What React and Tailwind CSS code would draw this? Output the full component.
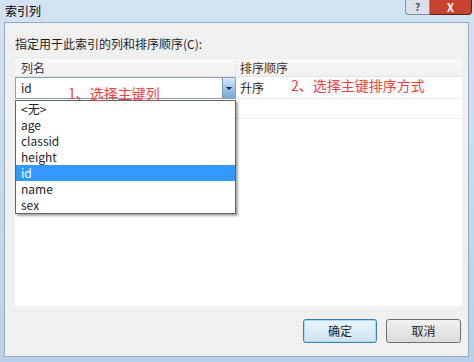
import React from "react";

const font = { fontFamily: '"Microsoft YaHei", "Noto Sans CJK SC", sans-serif' };

const items = ["<无>", "age", "classid", "height", "id", "name", "sex"];

export default function App() {
  return (
    <div
      className="w-[474px] h-[362px] flex flex-col bg-gradient-to-b from-[#d4e3f3] to-[#b9d0ea] text-[12px] text-[#1e1e1e] overflow-hidden"
      style={font}
    >
      {/* title bar */}
      <div className="h-[22px] flex items-start justify-between pl-[5px] pr-[2px]">
        <span className="mt-[3px] leading-[16px] text-black">索引列</span>
        <div className="flex items-start">
          <div className="w-[25px] h-[15px] rounded-bl-[4px] border border-t-0 border-[#7f8fa6] bg-[#d9e1ea] flex items-center justify-center text-[10px] font-bold leading-none text-[#3f536b]">
            ?
          </div>
          <div className="w-[42px] h-[15px] shrink-0 rounded-br-[4px] border-r border-b border-[#5e2018] bg-[#c7432f] flex items-center justify-center">
            <span className="text-[11px] font-bold leading-none text-white">X</span>
          </div>
        </div>
      </div>

      {/* client area */}
      <div className="flex-1 ml-[4px] mr-[5px] border border-[#97a9c0] bg-[#f0f0f0] pl-[10px] pr-[6px] pt-[13px] flex flex-col">
        <div className="leading-[16px]">指定用于此索引的列和排序顺序(C):</div>

        {/* grid */}
        <div className="relative mt-[7px] h-[247px] bg-white">
          <div className="flex h-[18px] border-b border-[#e3e3e3] bg-gradient-to-b from-[#f9f9f9] to-[#f1f1f1] text-[#333] leading-[18px]">
            <div className="w-[221px] pl-[6px] border-r border-[#e6e6e6]">列名</div>
            <div className="flex-1 pl-[4px]">排序顺序</div>
          </div>
          <div className="flex h-[22px] border-b border-[#ececec]">
            <div className="w-[221px] h-[22px] border border-[#8f9fb5] flex items-center">
              <span className="flex-1 pl-[5px] leading-[16px]">id</span>
              <div className="w-[13px] h-[20px] border-l border-[#7e98b8] bg-gradient-to-b from-[#d8eaf8] via-[#9cc6e8] to-[#77aad6] flex items-center justify-center">
                <div className="w-0 h-0 border-l-[3px] border-r-[3px] border-t-[3px] border-l-transparent border-r-transparent border-t-[#1c2a3a]" />
              </div>
            </div>
            <div className="flex-1 pl-[4px] leading-[21px]">升序</div>
          </div>
          <div className="flex h-[20px] border-b border-[#ececec]">
            <div className="w-[221px] border-r border-[#ececec]" />
            <div className="flex-1" />
          </div>

          {/* dropdown list */}
          <div className="absolute left-0 top-[41px] w-[221px] border border-[#646464] bg-white shadow-[2px_2px_2px_rgba(0,0,0,0.35)]">
            {items.map((it) => (
              <div
                key={it}
                className={`h-[16px] leading-[16px] pl-[5px] ${
                  it === "id" ? "bg-[#3399ff] text-white" : ""
                }`}
              >
                {it}
              </div>
            ))}
          </div>

          {/* annotations */}
          <div className="absolute left-[53px] top-[25px] text-[14px] leading-[18px] text-[#ef3f3f]">
            1、选择主键列
          </div>
          <div className="absolute left-[276px] top-[17px] text-[14px] leading-[18px] text-[#ef3f3f]">
            2、选择主键排序方式
          </div>
        </div>

        {/* buttons */}
        <div className="flex justify-end gap-[9px] mt-[13px] pr-[1px]">
          <button className="w-[74px] h-[24px] rounded-[3px] border border-[#3c7fb1] bg-gradient-to-b from-[#eaf6fd] to-[#cfe3f0] shadow-[inset_0_0_0_1px_#a8dcf4] text-[#1e1e1e]">
            确定
          </button>
          <button className="w-[75px] h-[24px] rounded-[3px] border border-[#707070] bg-gradient-to-b from-[#f2f2f2] to-[#dadada] text-[#1e1e1e]">
            取消
          </button>
        </div>
      </div>
      <div className="h-[5px]" />
    </div>
  );
}
